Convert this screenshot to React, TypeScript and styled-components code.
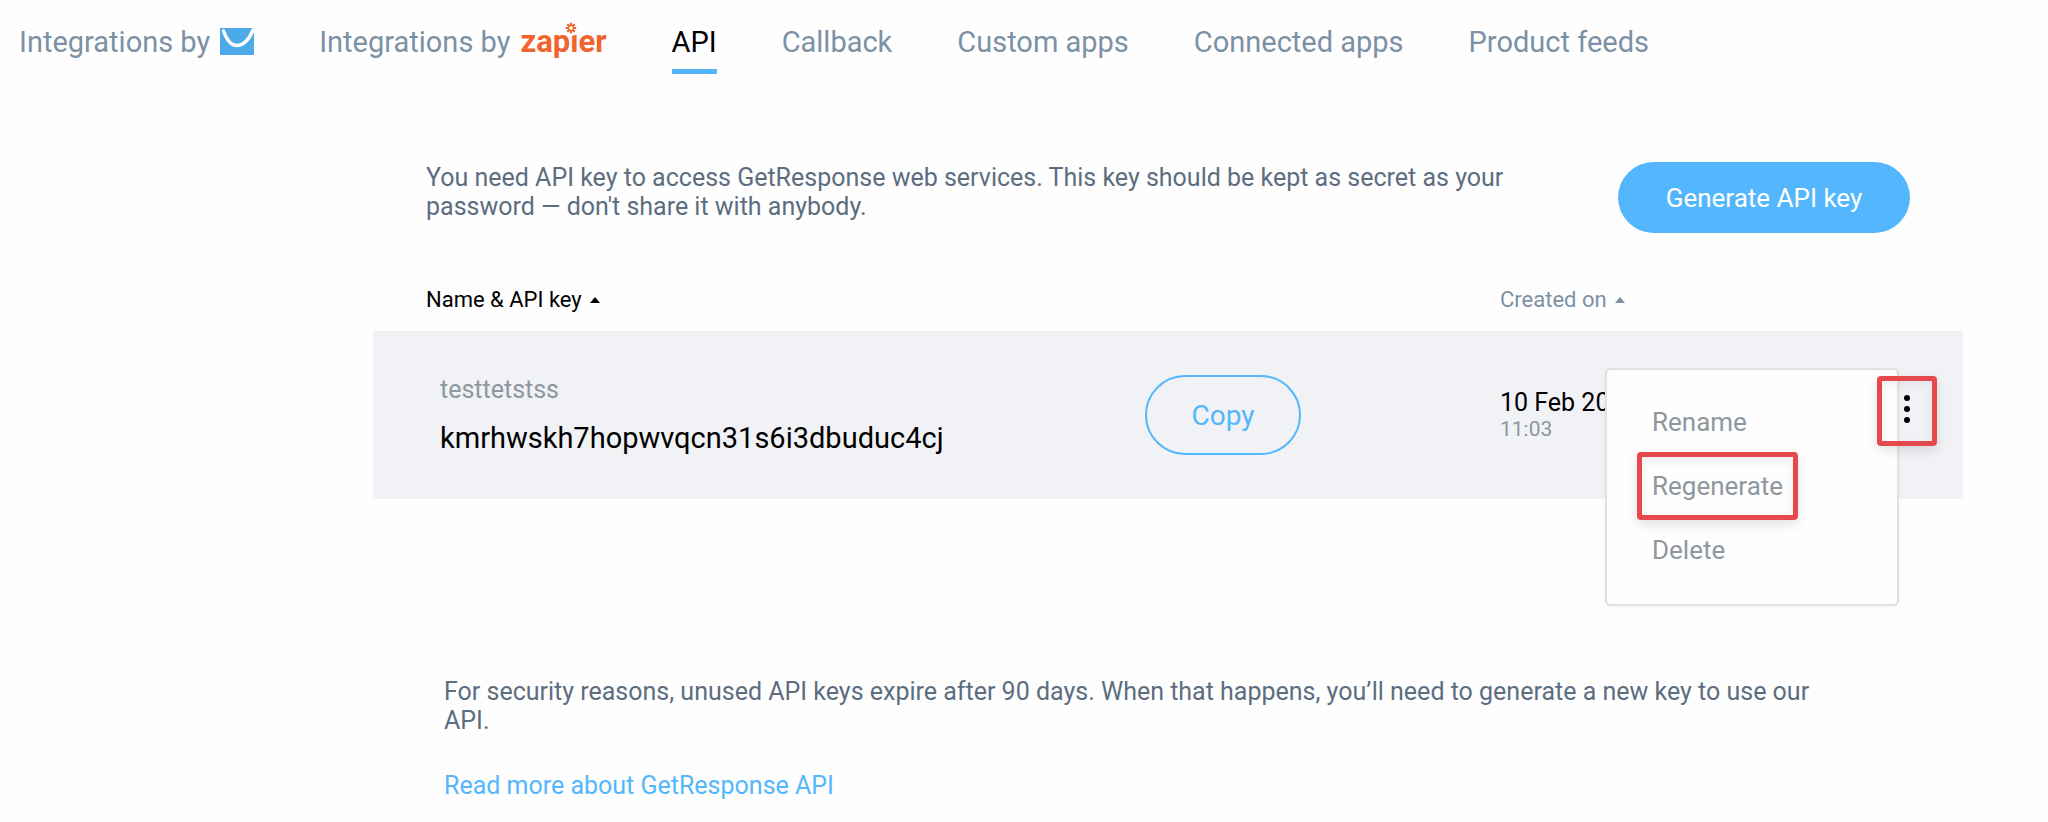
import React from "react";
import styled, { createGlobalStyle, css } from "styled-components";

const color = {
  blue: "#54b6fc",
  slate: "#7c91a5",
  text: "#5d6d80",
  muted: "#8f979e",
  row: "#f1f2f6",
  red: "#e6494d",
  zapier: "#f1642f",
};

const GlobalStyle = createGlobalStyle`
  *, *::before, *::after { box-sizing: border-box; }
  body {
    margin: 0;
    background: #fefefe;
    color: #000;
    font-family: Roboto, "Liberation Sans", sans-serif;
  }
  button { font-family: inherit; cursor: pointer; }
  a { text-decoration: none; }
`;

const Tabs = styled.nav`
  display: flex;
  gap: 65px;
  padding: 20px 19px 0;
`;

const Tab = styled.a<{ $active?: boolean }>`
  display: flex;
  align-items: center;
  gap: 10px;
  height: 54px;
  padding-bottom: 6px;
  border-bottom: 5px solid transparent;
  font-size: 29px;
  line-height: 32px;
  white-space: nowrap;
  color: ${color.slate};
  ${({ $active }) =>
    $active &&
    css`
      color: #000;
      border-color: ${color.blue};
    `}
`;

const Envelope = styled.svg`
  width: 34px;
  height: 27px;
`;

const ZapierLogo = styled.span`
  position: relative;
  font-size: 31px;
  font-weight: bold;
  line-height: 40px;
  color: ${color.zapier};
`;

const Star = styled.svg`
  position: absolute;
  left: 44px;
  top: 0;
  width: 14px;
  height: 14px;
`;

const Main = styled.main`
  padding: 88px 85px 24px 373px;
`;

const Intro = styled.section`
  display: flex;
  justify-content: space-between;
  align-items: flex-start;
  gap: 64px;
  padding: 0 53px;
`;

const IntroText = styled.div`
  padding-top: 1px;
`;

const Paragraph = styled.p`
  margin: 0;
  font-size: 25px;
  line-height: 29px;
  color: ${color.text};
`;

const PrimaryButton = styled.button`
  flex: none;
  width: 292px;
  height: 71px;
  border: 0;
  border-radius: 36px;
  background: ${color.blue};
  color: #fff;
  font-size: 26px;
`;

const KeyTable = styled.table`
  width: 100%;
  margin-top: 53px;
  border-collapse: collapse;
  table-layout: fixed;
`;

const HeadCell = styled.th`
  height: 45px;
  padding: 0;
  text-align: left;
  vertical-align: top;
  &:first-child { padding-left: 53px; }
`;

const SortButton = styled.button<{ $active?: boolean }>`
  display: flex;
  align-items: center;
  gap: 8px;
  padding: 0;
  border: 0;
  background: none;
  font-size: 22px;
  line-height: 28px;
  color: ${({ $active }) => ($active ? "#000" : color.slate)};
`;

const Caret = styled.svg`
  width: 10px;
  height: 6px;
  fill: currentColor;
`;

const KeyRow = styled.tr`
  height: 168px;
  background: ${color.row};
`;

const Cell = styled.td`
  position: relative;
  padding: 0;
  &:first-child { padding-left: 67px; }
`;

const KeyName = styled.div`
  margin-bottom: 18px;
  font-size: 25px;
  line-height: 28px;
  color: ${color.muted};
`;

const KeyValue = styled.div`
  font-size: 29px;
  line-height: 32px;
`;

const CopyButton = styled.button`
  display: block;
  width: 156px;
  height: 80px;
  border: 2px solid ${color.blue};
  border-radius: 40px;
  background: none;
  color: ${color.blue};
  font-size: 28px;
`;

const DateText = styled.div`
  font-size: 25px;
  line-height: 28px;
  white-space: nowrap;
`;

const TimeText = styled.div`
  font-size: 21px;
  line-height: 24px;
  color: ${color.muted};
`;

const Menu = styled.ul`
  position: absolute;
  top: 37px;
  right: 64px;
  width: 294px;
  height: 238px;
  margin: 0;
  padding: 18px 30px;
  list-style: none;
  background: #fefefe;
  border: 2px solid #e1e1e3;
  border-radius: 6px;
  box-shadow: 0 1px 3px rgba(0, 0, 0, 0.06);
`;

const highlight = css`
  border-color: ${color.red};
  box-shadow: 0 4px 12px rgba(0, 0, 0, 0.12), inset 0 4px 12px rgba(0, 0, 0, 0.06);
`;

const MenuButton = styled.button<{ $highlighted?: boolean }>`
  display: block;
  height: 68px;
  margin-bottom: -4px;
  padding: 0 10px;
  border: 5px solid transparent;
  border-radius: 4px;
  background: none;
  font-size: 26px;
  color: ${color.muted};
  ${({ $highlighted }) => $highlighted && highlight}
`;

const MoreButton = styled.button`
  position: absolute;
  top: 45px;
  right: 26px;
  display: grid;
  place-items: center;
  width: 60px;
  height: 70px;
  padding: 0 0 4px;
  border: 5px solid transparent;
  border-radius: 4px;
  background: none;
  ${highlight}
`;

const Footer = styled.footer`
  display: grid;
  gap: 36px;
  justify-items: start;
  padding: 178px 120px 0 71px;
`;

const DocsLink = styled.a`
  font-size: 25px;
  line-height: 29px;
  color: ${color.blue};
`;

const CaretUp = () => (
  <Caret viewBox="0 0 10 6" aria-hidden="true">
    <path d="M5 0 10 6H0z" />
  </Caret>
);

const actions = ["Rename", "Regenerate", "Delete"];

export default function App() {
  return (
    <>
      <GlobalStyle />
      <Tabs>
        <Tab href="#getresponse">
          Integrations by
          <Envelope viewBox="0 0 34 27" role="img" aria-label="GetResponse">
            <path fill="#4caae9" d="M0 0h34v27H0z" />
            <path fill="none" stroke="#fff" strokeWidth="3.4" strokeLinecap="round" d="M3.5 3C7 13 11.500 17.500 17 17.500S28 14 33 2" />
          </Envelope>
        </Tab>
        <Tab href="#zapier">
          Integrations by
          <ZapierLogo>
            zapier
            <Star viewBox="0 0 14 14" aria-hidden="true">
              <circle cx="7" cy="7" r="7" fill="#fefefe" />
              <path
                stroke={color.zapier}
                strokeWidth="2.2"
                d="M7 .8v3.500M7 7.700v3.500M1.800 6h3.500M8.700 6h3.500M3.300 2.300l2.500 2.500M8.200 7.200l2.500 2.500M10.700 2.300 8.200 4.800M5.800 7.200 3.300 9.700"
              />
            </Star>
          </ZapierLogo>
        </Tab>
        <Tab href="#api" $active aria-current="page">API</Tab>
        <Tab href="#callback">Callback</Tab>
        <Tab href="#custom-apps">Custom apps</Tab>
        <Tab href="#connected-apps">Connected apps</Tab>
        <Tab href="#product-feeds">Product feeds</Tab>
      </Tabs>
      <Main>
        <Intro>
          <IntroText>
            <Paragraph>
              You need API key to access GetResponse web services. This key should be kept as secret as your
              password — don't share it with anybody.
            </Paragraph>
          </IntroText>
          <PrimaryButton type="button">Generate API key</PrimaryButton>
        </Intro>
        <KeyTable>
          <colgroup>
            <col />
            <col style={{ width: 355 }} />
            <col style={{ width: 377 }} />
            <col style={{ width: 86 }} />
          </colgroup>
          <thead>
            <tr>
              <HeadCell colSpan={2}>
                <SortButton type="button" $active>Name &amp; API key <CaretUp /></SortButton>
              </HeadCell>
              <HeadCell colSpan={2}>
                <SortButton type="button">Created on <CaretUp /></SortButton>
              </HeadCell>
            </tr>
          </thead>
          <tbody>
            <KeyRow>
              <Cell>
                <KeyName>testtetstss</KeyName>
                <KeyValue>kmrhwskh7hopwvqcn31s6i3dbuduc4cj</KeyValue>
              </Cell>
              <Cell>
                <CopyButton type="button">Copy</CopyButton>
              </Cell>
              <Cell>
                <DateText>10 Feb 20</DateText>
                <TimeText>11:03</TimeText>
              </Cell>
              <Cell>
                <Menu>
                  {actions.map((name) => (
                    <li key={name}>
                      <MenuButton type="button" $highlighted={name === "Regenerate"}>{name}</MenuButton>
                    </li>
                  ))}
                </Menu>
                <MoreButton type="button" aria-label="More actions">
                  <svg width="6" height="28" viewBox="0 0 6 28" aria-hidden="true">
                    <circle cx="3" cy="3" r="3" />
                    <circle cx="3" cy="14" r="3" />
                    <circle cx="3" cy="25" r="3" />
                  </svg>
                </MoreButton>
              </Cell>
            </KeyRow>
          </tbody>
        </KeyTable>
        <Footer>
          <Paragraph>
            For security reasons, unused API keys expire after 90 days. When that happens, you’ll need to generate a
            new key to use our API.
          </Paragraph>
          <DocsLink href="#docs">Read more about GetResponse API</DocsLink>
        </Footer>
      </Main>
    </>
  );
}
